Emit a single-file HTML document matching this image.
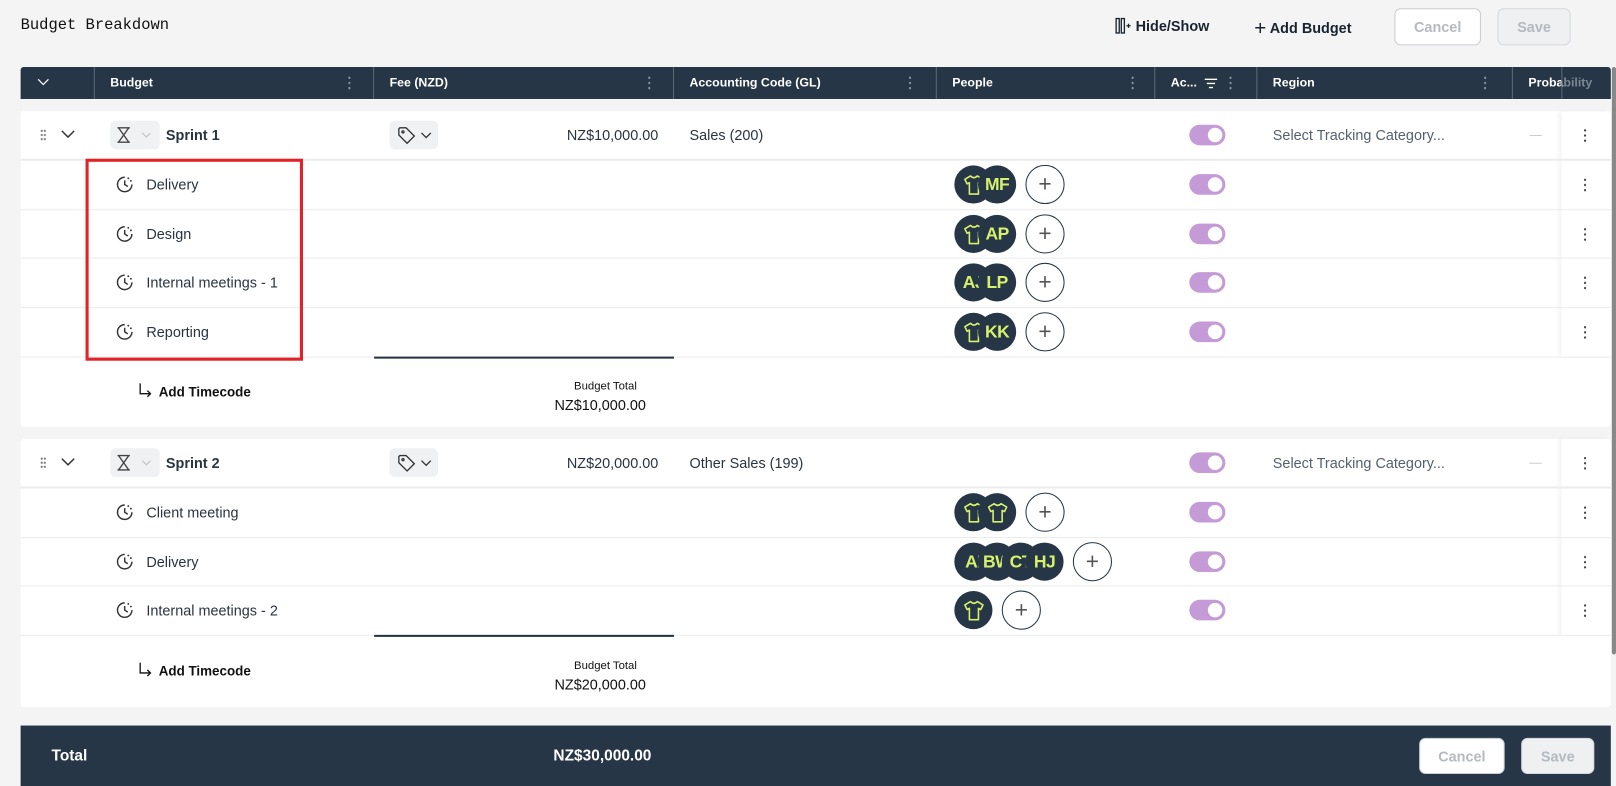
<!DOCTYPE html>
<html><head><meta charset="utf-8"><style>
*{box-sizing:border-box;margin:0;padding:0}
html,body{width:1616px;height:786px;overflow:hidden}
body{background:#f4f4f4;font-family:"Liberation Sans",sans-serif;color:#1f2a36;font-size:14px}
#w{position:absolute;left:0;top:0;width:1568px;height:763px;transform:scale(1.0306);transform-origin:0 0}
.a{position:absolute}
.title{left:20px;top:16px;font-family:"Liberation Mono",monospace;font-size:15px;color:#111}
.tb{top:17px;font-size:14px;font-weight:bold;color:#1a2430}
.btn{border:1px solid #c9ced3;border-radius:6px;background:#fff;color:#b5bac0;font-size:14px;font-weight:bold;display:flex;align-items:center;justify-content:center}
.btn.s{background:#eef0f2;border-color:#d4d7db}
.hdr{left:20px;top:65px;width:1543px;height:31px;background:#263646;border-radius:3px 3px 0 0;color:#fff;font-weight:bold;font-size:12px}
.hc{position:absolute;top:0;height:31px;line-height:31px;border-left:1px solid #5b6977;padding-left:15px}
.hd{position:absolute;top:8px;width:2px;height:15px;background:radial-gradient(circle,#8a97a4 1px,transparent 1.2px) 0 0/2px 5px}
.card{left:20px;width:1543px;background:#fff;border-radius:3px}
.line{position:absolute;left:0;width:1543px;height:2px;background:#ececec}
.t{position:absolute;font-size:14px;color:#2a3440;transform:translateY(-50%)}
.b{font-weight:bold}
.av{position:absolute;width:37px;height:37px;border-radius:50%;background:#263646;color:#d6f26c;font-weight:bold;font-size:17px;display:flex;align-items:center;justify-content:center;transform:translateY(-50%);overflow:hidden;letter-spacing:-.5px}
.pl{position:absolute;width:38px;height:38px;border-radius:50%;border:1px solid #263646;background:#fff;transform:translateY(-50%);color:#555;font-size:22px;display:flex;align-items:center;justify-content:center;font-weight:300}
.tg{position:absolute;left:1134px;width:35px;height:20px;border-radius:10px;background:#c49bd6;transform:translateY(-50%)}
.tg:after{content:"";position:absolute;right:3px;top:3px;width:14px;height:14px;border-radius:50%;background:#fff}
.dm{position:absolute;left:1517px;width:2px;height:14px;transform:translateY(-50%);background:radial-gradient(circle,#444 1px,transparent 1.2px) 0 0/2px 5px}
.mcol{position:absolute;left:1495px;width:48px;box-shadow:-3px 0 4px rgba(0,0,0,.05)}
.drag{position:absolute;left:19px;width:6px;height:12px;transform:translateY(-50%);background:radial-gradient(circle,#777 .9px,transparent 1.1px) 0 0/3px 4px}
.pill{position:absolute;height:28px;background:#f0f1f3;border-radius:5px;transform:translateY(-50%)}
.ck{position:absolute;left:92px;width:18px;height:18px;transform:translateY(-50%)}
</style></head><body><div id="w">
<svg width="0" height="0" style="position:absolute"><defs>
<symbol id="sh" viewBox="0 0 20 20"><path d="M7 2 L2 5 L4 9 L6 8 V18 H14 V8 L16 9 L18 5 L13 2 Q10 5 7 2Z" fill="none" stroke="#d6f26c" stroke-width="1.4" stroke-linejoin="round"/></symbol>
<symbol id="ck" viewBox="0 0 18 18"><path d="M9 2A7 7 0 1 0 16 9" fill="none" stroke="#333" stroke-width="1.4"/><path d="M9 5v4l3 2" fill="none" stroke="#333" stroke-width="1.4"/><circle cx="12.5" cy="3" r=".9" fill="#333"/><circle cx="15" cy="5.5" r=".9" fill="#333"/></symbol>
<symbol id="ar" viewBox="0 0 14 16"><path d="M2 1v10h10M9 8l3 3-3 3" fill="none" stroke="#111" stroke-width="1.3"/></symbol>
</defs></svg>
<div class="a title">Budget Breakdown</div>
<div class="a tb" style="left:1082px"><svg width="16" height="16" style="vertical-align:-3px" viewBox="0 0 16 16" fill="none" stroke="#1a2430" stroke-width="1.3"><rect x="1" y="1" width="3" height="14"/><rect x="6" y="1" width="3" height="14"/><path d="M11 8h4M13 6v4"/></svg> Hide/Show</div>
<div class="a tb" style="left:1217px"><span style="font-size:20px;font-weight:300;vertical-align:-2px">+</span> Add Budget</div>
<div class="a btn" style="left:1353px;top:8px;width:84px;height:36px">Cancel</div>
<div class="a btn s" style="left:1453px;top:8px;width:71px;height:36px">Save</div>

<div class="a hdr">
<svg class="a" style="left:16px;top:11px" width="12" height="8" viewBox="0 0 12 8" fill="none" stroke="#fff" stroke-width="1.2"><path d="M1 1l5 5 5-5"/></svg>
<div class="hc" style="left:71px;width:271px">Budget</div><div class="hd" style="left:318px"></div>
<div class="hc" style="left:342px;width:291px">Fee (NZD)</div><div class="hd" style="left:609px"></div>
<div class="hc" style="left:633px">Accounting Code (GL)</div><div class="hd" style="left:862px"></div>
<div class="hc" style="left:888px">People</div><div class="hd" style="left:1078px"></div>
<div class="hc" style="left:1100px">Ac...</div>
<svg class="a" style="left:1148px;top:11px" width="14" height="10" viewBox="0 0 14 10" stroke="#fff" stroke-width="1.3"><path d="M1 1h12M3 5h8M5 9h4"/></svg><div class="hd" style="left:1173px"></div>
<div class="hc" style="left:1199px">Region</div><div class="hd" style="left:1420px"></div>
<div class="hc" style="left:1447px">Proba<span style="color:#7b8794">bility</span></div>
<div class="hc" style="left:1495px;width:48px"></div>
</div>

<!-- card 1 -->
<div class="a card" style="top:108px;height:306px">
<div class="mcol" style="top:0;height:238px"></div>
<div class="drag" style="top:23px"></div>
<svg class="a" style="left:39px;top:18px" width="14" height="9" viewBox="0 0 14 9" fill="none" stroke="#333" stroke-width="1.4"><path d="M1 1l6 6 6-6"/></svg>
<div class="pill" style="left:87px;top:23px;width:48px"></div>
<svg class="a" style="left:93px;top:15px" width="14" height="16" viewBox="0 0 14 16" fill="none" stroke="#444" stroke-width="1.3"><path d="M1 1h12M1 15h12M2 1l10 14M12 1L2 15"/></svg>
<svg class="a" style="left:117px;top:20px" width="10" height="6" viewBox="0 0 10 6" fill="none" stroke="#bbb"><path d="M1 1l4 4 4-4"/></svg>
<div class="t b" style="left:141px;top:23px">Sprint 1</div>
<div class="pill" style="left:358px;top:23px;width:47px"></div>
<svg class="a" style="left:366px;top:15px" width="18" height="17" viewBox="0 0 18 17" fill="none" stroke="#333" stroke-width="1.3"><path d="M1 2v6l8 8 7-7-8-8H2z"/><circle cx="5" cy="5" r="1"/></svg>
<svg class="a" style="left:388px;top:20px" width="11" height="7" viewBox="0 0 11 7" fill="none" stroke="#333" stroke-width="1.3"><path d="M1 1l4.5 4.5L10 1"/></svg>
<div class="t" style="left:530px;top:23px">NZ$10,000.00</div>
<div class="t" style="left:649px;top:23px">Sales (200)</div>
<div class="tg" style="top:23px"></div>
<div class="t" style="left:1215px;top:23px;color:#556170">Select Tracking Category...</div>
<div class="a" style="left:1464px;top:23px;width:12px;height:1px;background:#ccc"></div>
<div class="dm" style="top:23px"></div>
<div class="line" style="top:46px"></div>

<div class="line" style="top:95px;height:1px"></div>
<div class="line" style="top:142px;height:1px"></div>
<div class="line" style="top:190px;height:1px"></div>
<div class="line" style="top:238px;height:1px"></div>
<div class="a" style="left:343px;top:238px;width:291px;height:2px;background:#263646"></div>

<svg class="ck" style="top:71px"><use href="#ck"/></svg><div class="t" style="left:122px;top:71px">Delivery</div>
<svg class="ck" style="top:119px"><use href="#ck"/></svg><div class="t" style="left:122px;top:119px">Design</div>
<svg class="ck" style="top:166px"><use href="#ck"/></svg><div class="t" style="left:122px;top:166px">Internal meetings - 1</div>
<svg class="ck" style="top:214px"><use href="#ck"/></svg><div class="t" style="left:122px;top:214px">Reporting</div>

<div class="av" style="left:906px;top:71px"><svg width="22" height="22"><use href="#sh"/></svg></div><div class="av" style="left:929px;top:71px">MF</div><div class="pl" style="left:975px;top:71px">+</div>
<div class="av" style="left:906px;top:119px"><svg width="22" height="22"><use href="#sh"/></svg></div><div class="av" style="left:929px;top:119px">AP</div><div class="pl" style="left:975px;top:119px">+</div>
<div class="av" style="left:906px;top:166px">AJ</div><div class="av" style="left:929px;top:166px">LP</div><div class="pl" style="left:975px;top:166px">+</div>
<div class="av" style="left:906px;top:214px"><svg width="22" height="22"><use href="#sh"/></svg></div><div class="av" style="left:929px;top:214px">KK</div><div class="pl" style="left:975px;top:214px">+</div>
<div class="tg" style="top:71px"></div><div class="tg" style="top:119px"></div><div class="tg" style="top:166px"></div><div class="tg" style="top:214px"></div>
<div class="dm" style="top:71px"></div><div class="dm" style="top:119px"></div><div class="dm" style="top:166px"></div><div class="dm" style="top:214px"></div>

<svg class="a" style="left:114px;top:263px" width="14" height="16"><use href="#ar"/></svg>
<div class="t b" style="left:134px;top:272px;font-size:13px;color:#111">Add Timecode</div>
<div class="t" style="left:537px;top:267px;font-size:11px;color:#111">Budget Total</div>
<div class="t" style="left:518px;top:285px;color:#111">NZ$10,000.00</div>
</div>

<!-- card 2 -->
<div class="a card" style="top:426px;height:260px">
<div class="mcol" style="top:0;height:190px"></div>
<div class="drag" style="top:23px"></div>
<svg class="a" style="left:39px;top:18px" width="14" height="9" viewBox="0 0 14 9" fill="none" stroke="#333" stroke-width="1.4"><path d="M1 1l6 6 6-6"/></svg>
<div class="pill" style="left:87px;top:23px;width:48px"></div>
<svg class="a" style="left:93px;top:15px" width="14" height="16" viewBox="0 0 14 16" fill="none" stroke="#444" stroke-width="1.3"><path d="M1 1h12M1 15h12M2 1l10 14M12 1L2 15"/></svg>
<svg class="a" style="left:117px;top:20px" width="10" height="6" viewBox="0 0 10 6" fill="none" stroke="#bbb"><path d="M1 1l4 4 4-4"/></svg>
<div class="t b" style="left:141px;top:23px">Sprint 2</div>
<div class="pill" style="left:358px;top:23px;width:47px"></div>
<svg class="a" style="left:366px;top:15px" width="18" height="17" viewBox="0 0 18 17" fill="none" stroke="#333" stroke-width="1.3"><path d="M1 2v6l8 8 7-7-8-8H2z"/><circle cx="5" cy="5" r="1"/></svg>
<svg class="a" style="left:388px;top:20px" width="11" height="7" viewBox="0 0 11 7" fill="none" stroke="#333" stroke-width="1.3"><path d="M1 1l4.5 4.5L10 1"/></svg>
<div class="t" style="left:530px;top:23px">NZ$20,000.00</div>
<div class="t" style="left:649px;top:23px">Other Sales (199)</div>
<div class="tg" style="top:23px"></div>
<div class="t" style="left:1215px;top:23px;color:#556170">Select Tracking Category...</div>
<div class="a" style="left:1464px;top:23px;width:12px;height:1px;background:#ccc"></div>
<div class="dm" style="top:23px"></div>
<div class="line" style="top:46px"></div>
<div class="line" style="top:95px;height:1px"></div>
<div class="line" style="top:142px;height:1px"></div>
<div class="line" style="top:190px;height:1px"></div>
<div class="a" style="left:343px;top:190px;width:291px;height:2px;background:#263646"></div>

<svg class="ck" style="top:71px"><use href="#ck"/></svg><div class="t" style="left:122px;top:71px">Client meeting</div>
<svg class="ck" style="top:119px"><use href="#ck"/></svg><div class="t" style="left:122px;top:119px">Delivery</div>
<svg class="ck" style="top:166px"><use href="#ck"/></svg><div class="t" style="left:122px;top:166px">Internal meetings - 2</div>

<div class="av" style="left:906px;top:71px"><svg width="22" height="22"><use href="#sh"/></svg></div><div class="av" style="left:929px;top:71px"><svg width="22" height="22"><use href="#sh"/></svg></div><div class="pl" style="left:975px;top:71px">+</div>
<div class="av" style="left:906px;top:119px">AI</div><div class="av" style="left:929px;top:119px">BW</div><div class="av" style="left:952px;top:119px">CT</div><div class="av" style="left:975px;top:119px">HJ</div><div class="pl" style="left:1021px;top:119px">+</div>
<div class="av" style="left:906px;top:166px"><svg width="22" height="22"><use href="#sh"/></svg></div><div class="pl" style="left:952px;top:166px">+</div>
<div class="tg" style="top:71px"></div><div class="tg" style="top:119px"></div><div class="tg" style="top:166px"></div>
<div class="dm" style="top:71px"></div><div class="dm" style="top:119px"></div><div class="dm" style="top:166px"></div>

<svg class="a" style="left:114px;top:216px" width="14" height="16"><use href="#ar"/></svg>
<div class="t b" style="left:134px;top:225px;font-size:13px;color:#111">Add Timecode</div>
<div class="t" style="left:537px;top:220px;font-size:11px;color:#111">Budget Total</div>
<div class="t" style="left:518px;top:238px;color:#111">NZ$20,000.00</div>
</div>

<div class="a" style="left:83px;top:154px;width:211px;height:196px;border:3px solid #e32227"></div>

<div class="a" style="left:20px;top:704px;width:1543px;height:59px;background:#263646"></div>
<div class="a b" style="left:50px;top:725px;color:#fff;font-size:15px">Total</div>
<div class="a b" style="left:537px;top:725px;color:#fff;font-size:15px">NZ$30,000.00</div>
<div class="a btn" style="left:1377px;top:716px;width:83px;height:35px">Cancel</div>
<div class="a btn s" style="left:1476px;top:716px;width:71px;height:35px">Save</div>
<div class="a" style="left:1564px;top:65px;width:4px;height:570px;background:#888;border-radius:2px"></div>
</div></body></html>
